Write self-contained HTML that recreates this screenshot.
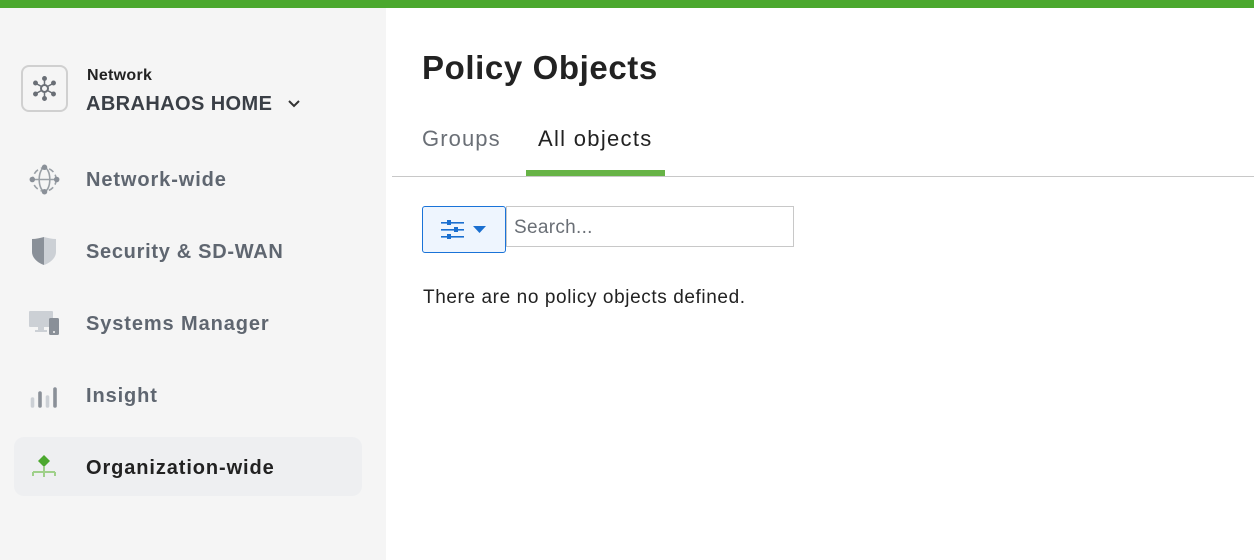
<!DOCTYPE html>
<html><head><style>
*{margin:0;padding:0;box-sizing:border-box}
body{width:1254px;height:560px;overflow:hidden;background:#fff;font-family:"Liberation Sans",Arial,sans-serif;position:relative}
.abs{position:absolute}
.top{left:0;top:0;width:1254px;height:8px;background:#4ba82e}
.side{left:0;top:8px;width:386px;height:552px;background:#f5f5f5}
.nav{font-size:20px;font-weight:bold;color:#5f6670;left:86px;letter-spacing:0.9px}
</style></head><body>
<div class="abs top"></div>
<div class="abs side"></div>
<div class="abs" style="left:21px;top:65px;width:47px;height:47px;border:2px solid #d0d0d0;border-radius:8px;background:#f5f5f5"></div>
<svg class="abs" style="left:27px;top:71px" width="35" height="35" viewBox="0 0 35 35" fill="#6a6f76" stroke="#6a6f76" stroke-width="1.5">
<circle cx="17.5" cy="17.5" r="3.5" fill="none" stroke-width="2"/>
<line x1="17.5" y1="8" x2="17.5" y2="14"/><line x1="17.5" y1="21" x2="17.5" y2="27"/>
<line x1="9" y1="12.5" x2="14.5" y2="15.5"/><line x1="26" y1="12.5" x2="20.5" y2="15.5"/>
<line x1="9" y1="22.5" x2="14.5" y2="19.5"/><line x1="26" y1="22.5" x2="20.5" y2="19.5"/>
<circle cx="17.5" cy="7.5" r="1.7"/><circle cx="17.5" cy="27.5" r="1.7"/><circle cx="8.5" cy="12" r="1.7"/><circle cx="26.5" cy="12" r="1.7"/><circle cx="8.5" cy="23" r="1.7"/><circle cx="26.5" cy="23" r="1.7"/>
</svg>
<div class="abs" style="left:87px;top:67px;font-size:16px;font-weight:bold;color:#222;letter-spacing:0.3px">Network</div>
<div class="abs" style="left:86px;top:93px;font-size:20px;font-weight:bold;color:#3a3f46;letter-spacing:0.4px">ABRAHAOS HOME</div>
<svg class="abs" style="left:287px;top:99px" width="14" height="10" viewBox="0 0 14 10"><path d="M2 2l5 5 5-5" fill="none" stroke="#333" stroke-width="2"/></svg>

<svg class="abs" style="left:27px;top:162px" width="35" height="35" viewBox="0 0 33 33" fill="none" stroke="#9aa0a6" stroke-width="1.5">
<circle cx="16.5" cy="16.5" r="11" stroke-dasharray="5 3"/><ellipse cx="16.5" cy="16.5" rx="5" ry="11"/><line x1="5.5" y1="16.5" x2="27.5" y2="16.5"/>
<g fill="#8a9098" stroke="none"><circle cx="16.5" cy="5" r="2.6"/><circle cx="16.5" cy="28" r="2.6"/><circle cx="5" cy="16.5" r="2.6"/><circle cx="28" cy="16.5" r="2.6"/></g>
</svg>
<div class="abs nav" style="top:169px">Network-wide</div>

<svg class="abs" style="left:31px;top:236px" width="26" height="30" viewBox="0 0 26 30">
<path d="M13 1C9 2 5 3 1 3v13c0 6 6 11 12 13z" fill="#8a9098"/><path d="M13 1c4 1 8 2 12 2v13c0 6-6 11-12 13z" fill="#ccd0d5"/>
</svg>
<div class="abs nav" style="top:241px;letter-spacing:0.7px">Security &amp; SD-WAN</div>

<svg class="abs" style="left:28px;top:310px" width="33" height="26" viewBox="0 0 33 26">
<rect x="1" y="1" width="24" height="16" rx="1" fill="#ccd0d5"/><rect x="10" y="17" width="6" height="3" fill="#ccd0d5"/><rect x="7" y="20" width="12" height="2" fill="#ccd0d5"/>
<rect x="21" y="8" width="10" height="17" rx="1.5" fill="#8a9098"/><circle cx="26" cy="22" r="1" fill="#f5f5f5"/>
</svg>
<div class="abs nav" style="top:313px">Systems Manager</div>

<svg class="abs" style="left:30px;top:385px" width="28" height="24" viewBox="0 0 28 24" stroke-linecap="round" stroke-width="3.6">
<line x1="2.5" y1="14" x2="2.5" y2="21" stroke="#ccd0d5"/><line x1="10" y1="8" x2="10" y2="21" stroke="#8a9098"/><line x1="17.5" y1="12" x2="17.5" y2="21" stroke="#ccd0d5"/><line x1="25" y1="4" x2="25" y2="21" stroke="#8a9098"/>
</svg>
<div class="abs nav" style="top:385px">Insight</div>

<div class="abs" style="left:14px;top:437px;width:348px;height:59px;background:#eeeff1;border-radius:10px"></div>
<svg class="abs" style="left:30px;top:453px" width="28" height="25" viewBox="0 0 28 25">
<path d="M14 2l6 6-6 6-6-6z" fill="#4ba82e"/>
<path d="M14 14v10M3 19h22M3 19v4M25 19v4" stroke="#9fd08a" stroke-width="2" fill="none"/>
</svg>
<div class="abs nav" style="top:457px;color:#222">Organization-wide</div>

<div class="abs" style="left:422px;top:49px;font-size:33px;font-weight:bold;color:#222;letter-spacing:0.6px">Policy Objects</div>
<div class="abs" style="left:422px;top:126px;font-size:22px;color:#6a6f76;letter-spacing:1.1px">Groups</div>
<div class="abs" style="left:538px;top:126px;font-size:22px;color:#222;letter-spacing:1.3px">All objects</div>
<div class="abs" style="left:392px;top:176px;width:862px;height:1px;background:#c8c8c8"></div>
<div class="abs" style="left:526px;top:170px;width:139px;height:6px;background:#67b346"></div>

<div class="abs" style="left:422px;top:206px;width:84px;height:47px;border:1px solid #1a73d8;border-radius:3px;background:#eef5fe"></div>
<svg class="abs" style="left:440px;top:219px" width="50" height="24" viewBox="0 0 50 24" fill="#1a6fd0">
<rect x="1" y="3" width="23" height="1.6"/><rect x="1" y="10" width="23" height="1.6"/><rect x="1" y="17" width="23" height="1.6"/>
<rect x="7" y="1" width="4" height="5"/><rect x="14" y="8" width="4" height="5"/><rect x="7" y="15" width="4" height="5"/>
<path d="M33 7h13l-6.5 7z"/>
</svg>
<div class="abs" style="left:506px;top:206px;width:288px;height:41px;border:1px solid #c8c8c8;background:#fff"></div>
<div class="abs" style="left:514px;top:217px;font-size:19px;color:#6a6f76;letter-spacing:0.3px">Search...</div>
<div class="abs" style="left:423px;top:287px;font-size:19px;color:#222;letter-spacing:0.6px">There are no policy objects defined.</div>
</body></html>
